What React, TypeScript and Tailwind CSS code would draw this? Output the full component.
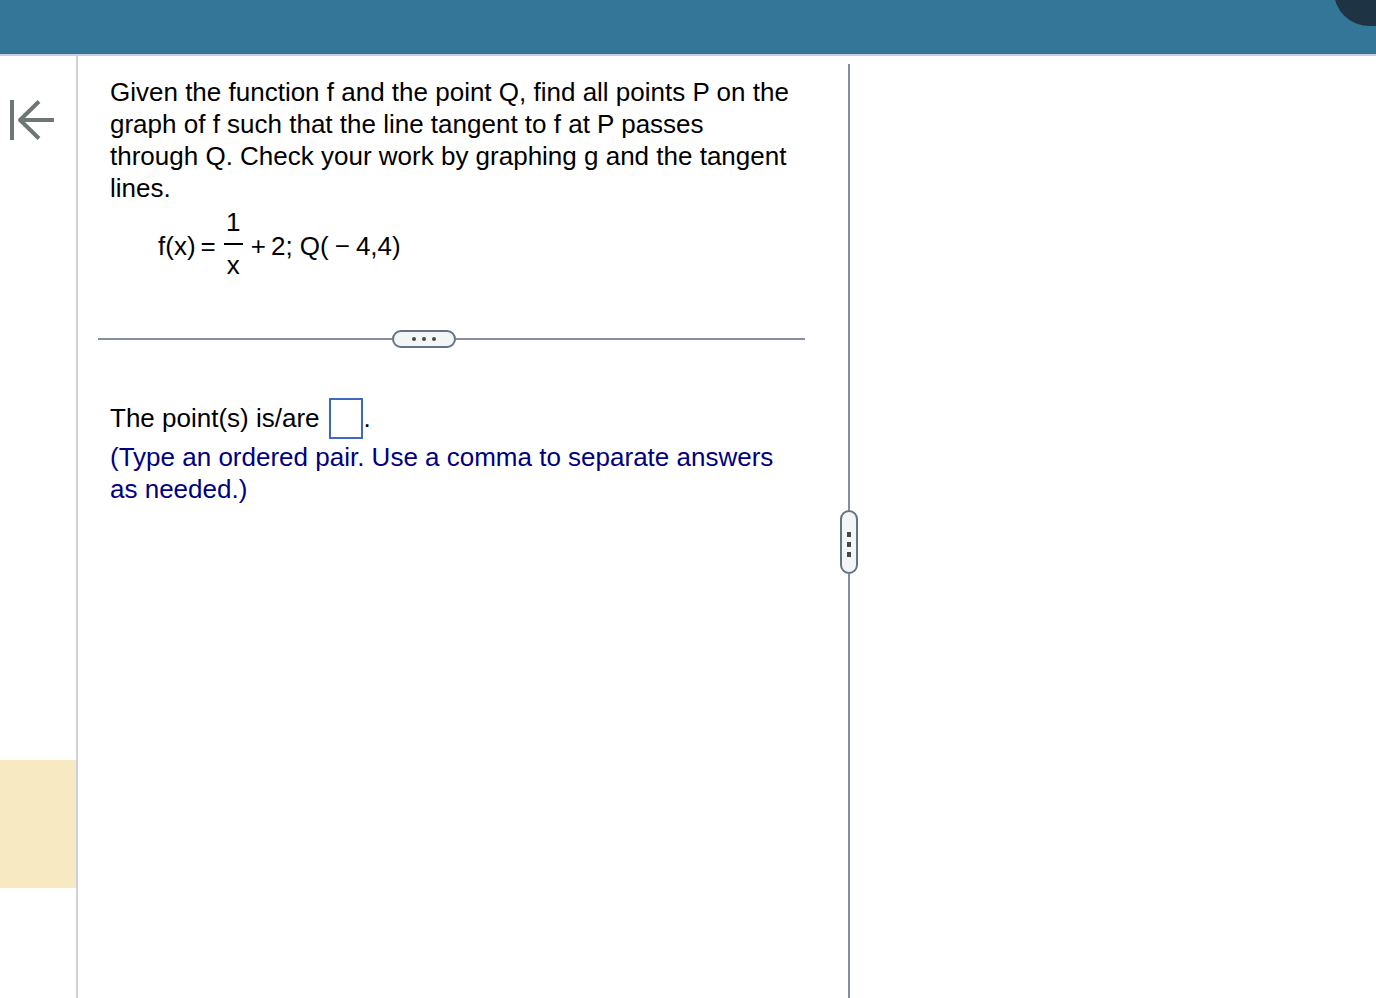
import { useState } from "react";

function Header() {
  return (
    <header className="relative h-14 shrink-0 overflow-hidden border-b-2 border-[#c9cedb] bg-[#347697]">
      <button
        type="button"
        aria-label="Account menu"
        className="absolute -right-12 -top-11 h-[70px] w-[90px] rounded-full bg-[#1e3344]"
      />
    </header>
  );
}

function Sidebar() {
  return (
    <aside className="flex w-[78px] shrink-0 flex-col justify-between border-r-2 border-[#ccd1dd] pb-[110px] pt-10">
      <button type="button" aria-label="Collapse panel" className="ml-2 h-12 w-12">
        <svg
          viewBox="0 0 48 48"
          className="h-12 w-12"
          fill="none"
          stroke="#6f7674"
          strokeWidth="4"
          strokeLinejoin="round"
        >
          <path d="M4 4V44M46 24H12M31 5.500L12 24L31 42.500" />
        </svg>
      </button>
      <div className="h-32 bg-[#f7eac3]" />
    </aside>
  );
}

function Formula() {
  return (
    <div className="flex h-20 items-center pl-12 leading-8">
      <span className="pt-1">f(x)</span>
      <span className="ml-[5px] pt-1">=</span>
      <span className="mx-2 flex flex-col items-center">
        <span className="h-[37px]">1</span>
        <span className="h-[2px] w-[19px] bg-black" />
        <span className="h-[37px] pt-1">x</span>
      </span>
      <span className="pt-1">+</span>
      <span className="ml-[5px] whitespace-pre pt-1">2; Q(</span>
      <span className="mx-[6px] pt-1">−</span>
      <span className="pt-1">4,4)</span>
    </div>
  );
}

function HorizontalDivider() {
  return (
    <div className="mt-[46px] flex items-center">
      <div className="h-[2px] flex-[294] bg-[#868da0]" />
      <button
        type="button"
        aria-label="Resize question area"
        className="flex h-[18px] w-16 items-center justify-center gap-[6px] rounded-full border-2 border-[#657480] bg-[#f3f5f7]"
      >
        <span className="size-1 rounded-full bg-[#484848]" />
        <span className="size-1 rounded-full bg-[#484848]" />
        <span className="size-1 rounded-full bg-[#484848]" />
      </button>
      <div className="h-[2px] flex-[349] bg-[#868da0]" />
    </div>
  );
}

function VerticalDivider() {
  return (
    <div className="flex flex-col items-center pt-2">
      <div className="w-[2px] flex-[446] bg-[#868da0]" />
      <button
        type="button"
        aria-label="Resize panels"
        className="flex h-16 w-[18px] flex-col items-center justify-center gap-[5px] rounded-full border-2 border-[#657480] bg-[#f3f5f7] pt-1"
      >
        <span className="h-[5px] w-1 bg-[#484848]" />
        <span className="h-[5px] w-1 bg-[#484848]" />
        <span className="h-[5px] w-1 bg-[#484848]" />
      </button>
      <div className="w-[2px] flex-[424] bg-[#868da0]" />
    </div>
  );
}

export default function App() {
  const [answer, setAnswer] = useState("");

  return (
    <div className="flex h-screen flex-col bg-white font-['Liberation_Sans',Arial,sans-serif] text-[26px] leading-8 text-black">
      <Header />
      <div className="flex min-h-0 flex-1">
        <Sidebar />
        <div className="grid min-w-0 flex-1 grid-cols-[minmax(0,762fr)_18px_minmax(0,518fr)]">
          <main className="pl-5 pr-[35px] pt-5">
            <div className="px-3">
              <p>
                Given the function f and the point Q, find all points P on the graph of f such that
                the line tangent to f at P passes through Q. Check your work by graphing g and the
                tangent lines.
              </p>
              <Formula />
            </div>
            <HorizontalDivider />
            <div className="mt-[50px] px-3">
              <div className="flex items-center">
                <label htmlFor="answer" className="pb-[2px]">
                  The point(s) is/are
                </label>
                <input
                  id="answer"
                  type="text"
                  value={answer}
                  onChange={(event) => setAnswer(event.target.value)}
                  className="ml-[9px] h-[41px] w-[34px] border-2 border-[#4068c0] px-1 outline-none"
                />
                <span className="ml-px pb-[2px]">.</span>
              </div>
              <p className="mt-[2px] text-[#00007f]">
                (Type an ordered pair. Use a comma to separate answers as needed.)
              </p>
            </div>
          </main>
          <VerticalDivider />
          <section aria-label="Work area" />
        </div>
      </div>
    </div>
  );
}
